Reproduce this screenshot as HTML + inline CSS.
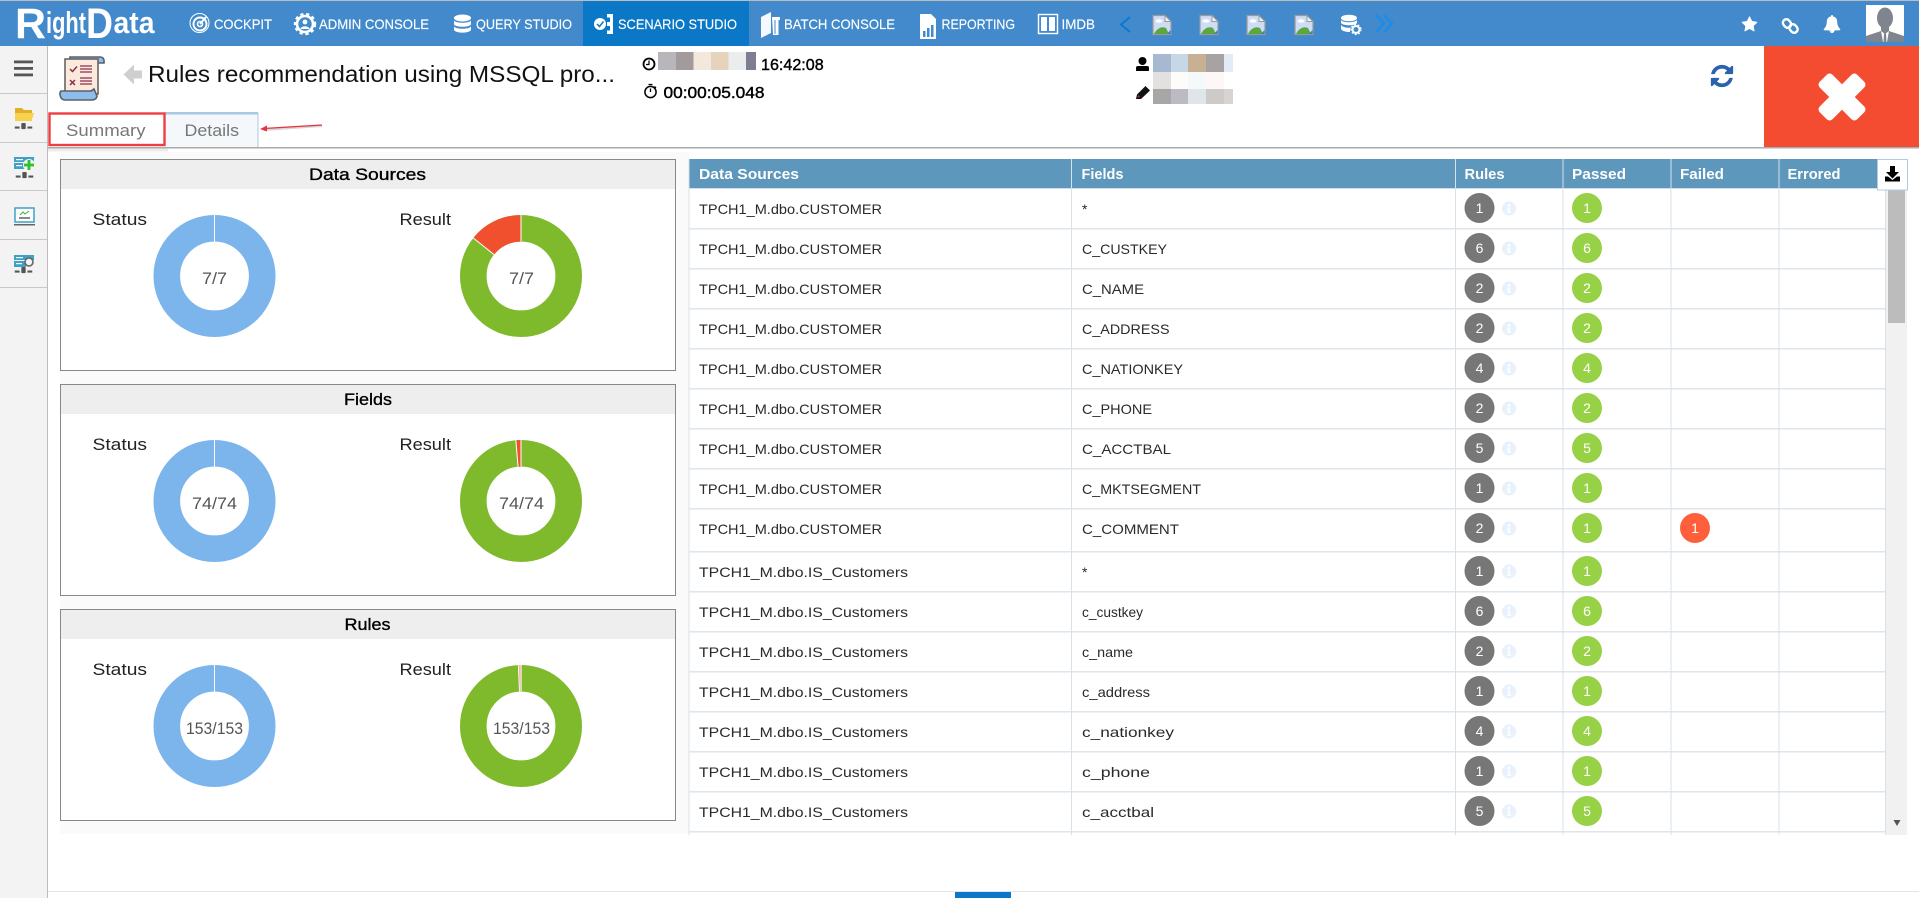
<!DOCTYPE html>
<html lang="en">
<head>
<meta charset="utf-8">
<title>Rules recommendation</title>
<style>
html,body{margin:0;padding:0;background:#fff;width:1919px;height:898px;overflow:hidden}
svg{display:block}
text{font-family:"Liberation Sans",sans-serif;white-space:pre}
.nav{font-size:14px;fill:#fff;stroke:#fff;stroke-width:.15}
.cell{font-size:14px;fill:#2a2a2a}
.th{font-size:15px;font-weight:700;fill:#fff}
.bn{font-size:14px;fill:#fff;text-anchor:middle}
.pt{font-size:17px;fill:#000;stroke:#000;stroke-width:.35}
.lb{font-size:16.5px;fill:#222}
.ct{font-size:17px;fill:#555}
.meta{font-size:15.5px;fill:#000;stroke:#000;stroke-width:.4}
.tab{font-size:16.5px;fill:#777}
</style>
</head>
<body>
<svg width="1919" height="898" viewBox="0 0 1919 898" xmlns="http://www.w3.org/2000/svg">
<defs>
<symbol id="broken" viewBox="0 0 20 20" overflow="visible">
  <path d="M1 .5H13L19 6.5V19.5H1Z" fill="#cfdcf5" stroke="#9a9a9a" stroke-width="1.2"/>
  <path d="M13 .5V6.5H19Z" fill="#f4f4f4" stroke="#9a9a9a" stroke-width="1"/>
  <ellipse cx="7" cy="6" rx="3.5" ry="1.8" fill="#fff"/>
  <path d="M2 19C5 13 10 11 14 13L17 19Z" fill="#5aa83c"/>
  <path d="M15 19L18.5 15V19Z" fill="#3f78c0"/>
</symbol>
<symbol id="info" viewBox="0 0 16 16" overflow="visible">
  <circle cx="8" cy="8" r="7.5" fill="#e8f2fc"/>
  <circle cx="8" cy="4.4" r="1.5" fill="#fff"/>
  <path d="M6.2 7H9.2V11.4H10V12.6H6.2V11.4H7V8.2H6.2Z" fill="#fff"/>
</symbol>
<symbol id="net" viewBox="0 0 20 8" overflow="visible">
  <rect x="7.5" y="0" width="5" height="7" rx="1" fill="#555"/>
  <rect x="0" y="4" width="5.5" height="2.4" fill="#555"/>
  <rect x="14.5" y="4" width="5.500" height="2.4" fill="#555"/>
</symbol>
</defs>

<!-- page -->
<rect width="1919" height="898" fill="#fff"/>
<rect x="0" y="0" width="1919" height="1" fill="#bdbdbd"/>

<!-- top bar -->
<rect x="0" y="1" width="1919" height="45" fill="#428acb"/>
<rect x="583" y="1" width="166" height="45" fill="#0a78c6"/>

<!-- logo -->
<text x="15" y="38" font-size="43" font-weight="700" fill="#fff" textLength="31" lengthAdjust="spacingAndGlyphs">R</text>
<text x="46" y="33" font-size="31" font-weight="700" fill="#fff" textLength="40" lengthAdjust="spacingAndGlyphs">ight</text>
<text x="86" y="38" font-size="43" font-weight="700" fill="#fff" textLength="27" lengthAdjust="spacingAndGlyphs">D</text>
<text x="113.500" y="33" font-size="31" font-weight="700" fill="#fff" textLength="41" lengthAdjust="spacingAndGlyphs">ata</text>

<!-- nav icons -->
<g fill="none" stroke="#fff">
  <circle cx="199.5" cy="23" r="9.5" stroke-width="1"/>
  <circle cx="200" cy="24" r="6.5" stroke-width="2"/>
  <circle cx="200" cy="24" r="2.5" stroke-width="1.6"/>
  <path d="M200 24L206 17" stroke-width="2"/>
</g>
<g>
  <circle cx="305" cy="24" r="8" fill="none" stroke="#fff" stroke-width="2.6"/>
  <circle cx="305" cy="24" r="10" fill="none" stroke="#fff" stroke-width="2.4" stroke-dasharray="3.2 2.8"/>
  <circle cx="305" cy="22" r="2.4" fill="#fff"/>
  <path d="M300.5 29C301 25.500 309 25.500 309.500 29Z" fill="#fff"/>
</g>
<g fill="#fff">
  <ellipse cx="462.500" cy="18" rx="8.500" ry="3.500"/>
  <path d="M454 20.500C456 23.500 469 23.500 471 20.500V24.500C469 27.500 456 27.500 454 24.500Z"/>
  <path d="M454 26.500C456 29.500 469 29.500 471 26.500V30C469 33.500 456 33.500 454 30Z"/>
</g>
<g>
  <circle cx="600" cy="24" r="6" fill="#fff"/>
  <path d="M597 24L599.500 26.500L603.500 21.500" fill="none" stroke="#0a78c6" stroke-width="1.500"/>
  <path d="M607 14H613V34H607V30.500H610V26H607V22H610V17.500H607Z" fill="#fff"/>
</g>
<g fill="#fff">
  <path d="M761 19L771 14V35L761 40Z" opacity=".95" transform="translate(0,-2)"/>
  <path d="M772 17H780V20H778.500V35H773Z"/>
  <rect x="774.500" y="20" width="1" height="14" fill="#428acb"/>
</g>
<g>
  <path d="M920 14H931L936 19V39H920Z" fill="#fff"/>
  <rect x="923" y="31" width="2.500" height="6" fill="#428acb"/>
  <rect x="927" y="28" width="2.500" height="9" fill="#428acb"/>
  <rect x="931" y="25" width="2.500" height="12" fill="#428acb"/>
</g>
<g>
  <rect x="1038.500" y="14.500" width="19" height="19" fill="none" stroke="#fff" stroke-width="1.400"/>
  <rect x="1041" y="17" width="6" height="14" fill="#fff"/>
  <rect x="1049" y="17" width="6" height="14" fill="#fff"/>
</g>

<!-- nav text -->
<text class="nav" x="214" y="29" textLength="58" lengthAdjust="spacingAndGlyphs">COCKPIT</text>
<text class="nav" x="319" y="29" textLength="110" lengthAdjust="spacingAndGlyphs">ADMIN CONSOLE</text>
<text class="nav" x="476" y="29" textLength="96" lengthAdjust="spacingAndGlyphs">QUERY STUDIO</text>
<text class="nav" x="618" y="29" textLength="119" lengthAdjust="spacingAndGlyphs">SCENARIO STUDIO</text>
<text class="nav" x="784" y="29" textLength="111" lengthAdjust="spacingAndGlyphs">BATCH CONSOLE</text>
<text class="nav" x="941.500" y="29" textLength="73.500" lengthAdjust="spacingAndGlyphs">REPORTING</text>
<text class="nav" x="1061.500" y="29" textLength="33.500" lengthAdjust="spacingAndGlyphs">IMDB</text>

<!-- chevron and broken icons -->
<path d="M1130 17L1121 24.500L1130 32" fill="none" stroke="#0a78d0" stroke-width="2"/>
<use href="#broken" x="1152" y="15" width="20" height="20"/>
<use href="#broken" x="1199" y="15" width="20" height="20"/>
<use href="#broken" x="1246" y="15" width="20" height="20"/>
<use href="#broken" x="1294" y="15" width="20" height="20"/>
<g fill="#fff">
  <ellipse cx="1349" cy="18" rx="8" ry="3.300"/>
  <path d="M1341 20C1343 23 1355 23 1357 20V23C1355 26 1343 26 1341 23Z"/>
  <path d="M1341 25C1343 28 1350 28 1352 27.500L1350 29V32C1346 32 1342 31 1341 29Z"/>
  <circle cx="1356" cy="29.500" r="3.500" fill="none" stroke="#fff" stroke-width="2"/>
  <circle cx="1356" cy="29.500" r="5" fill="none" stroke="#fff" stroke-width="1.200" stroke-dasharray="1.800 1.800"/>
</g>
<path d="M1376 15L1384 23.500L1376 32M1384 15L1392 23.500L1384 32" fill="none" stroke="#1d8ce8" stroke-width="2.500"/>

<!-- right icons -->
<svg x="1741" y="16" width="17" height="17" viewBox="0 0 1792 1792"><path fill="#fff" d="M1728 647q0 22-26 48l-363 354 86 500q1 7 1 20 0 21-10.500 35.500t-30.500 14.500q-19 0-40-12l-449-236-449 236q-22 12-40 12-21 0-31.500-14.500t-10.500-35.500q0-6 2-20l86-500-364-354q-25-27-25-48 0-37 56-46l502-73 225-455q19-41 49-41t49 41l225 455 502 73q56 9 56 46z"/></svg>
<g fill="none" stroke="#fff" stroke-width="2.400">
  <rect x="1783.500" y="19" width="7" height="9" rx="3.500" transform="rotate(-40 1787 23.500)"/>
  <rect x="1790" y="24" width="7" height="9" rx="3.500" transform="rotate(-40 1793.500 28.500)"/>
</g>
<svg x="1823" y="15" width="18" height="18" viewBox="0 0 1792 1792"><path fill="#fff" d="M912 1696q0-16-16-16-59 0-101.500-42.500t-42.500-101.500q0-16-16-16t-16 16q0 73 51.500 124.500t124.500 51.500q16 0 16-16zm816-288q0 52-38 90t-90 38h-448q0 106-75 181t-181 75-181-75-75-181h-448q-52 0-90-38t-38-90q50-42 91-88t85-119.500 74.500-158.500 50-206 19.500-260q0-152 117-282.500t307-158.500q-8-19-8-39 0-40 28-68t68-28 68 28 28 68q0 20-8 39 190 28 307 158.500t117 282.500q0 139 19.500 260t50 206 74.500 158.500 85 119.500 91 88z"/></svg>
<rect x="1866" y="5" width="38" height="37" fill="#fff"/>
<ellipse cx="1885" cy="18" rx="8" ry="10.500" fill="#7f858e"/>
<path d="M1881 26H1889V31L1904 36V42H1866V36L1881 31Z" fill="#7f858e"/>
<path d="M1881 31L1885 34L1889 31L1887 42H1883Z" fill="#fff"/>
<path d="M1884 33.500H1886L1886.500 42H1883.500Z" fill="#7f858e"/>

<!-- sidebar -->
<rect x="0" y="46" width="47" height="852" fill="#f3f3f3"/>
<rect x="47" y="46" width="1" height="852" fill="#bdbdbd"/>
<rect x="0" y="93" width="47" height="1" fill="#c8c8c8"/>
<rect x="0" y="142" width="47" height="1" fill="#c8c8c8"/>
<rect x="0" y="190" width="47" height="1" fill="#c8c8c8"/>
<rect x="0" y="239" width="47" height="1" fill="#c8c8c8"/>
<rect x="0" y="287" width="47" height="1" fill="#c8c8c8"/>
<rect x="14" y="60.500" width="19" height="2.800" fill="#555"/>
<rect x="14" y="67" width="19" height="2.800" fill="#555"/>
<rect x="14" y="73.500" width="19" height="2.800" fill="#555"/>

<path d="M15 108H22L24 110H32V121H15Z" fill="#e0b02c"/>
<path d="M15 113H34L31.500 121H15Z" fill="#f6d24f"/>
<use href="#net" x="14" y="123" width="19" height="7"/>

<rect x="14" y="157" width="20" height="5" fill="#3fa0c8"/>
<rect x="14" y="163" width="12" height="6" fill="#3fa0c8"/>
<rect x="16" y="159" width="7" height="1.200" fill="#fff"/>
<rect x="16" y="165" width="6" height="1.200" fill="#fff"/>
<circle cx="29" cy="165" r="6" fill="#f3f3f3"/>
<path d="M29 160V170M24 165H34" stroke="#2bc22b" stroke-width="2.800"/>
<use href="#net" x="15" y="172" width="19" height="7"/>

<rect x="15" y="208" width="19" height="14" fill="#fff" stroke="#3fa0c8" stroke-width="1.500"/>
<path d="M20 215L23 212L25 214L29 211" fill="none" stroke="#2fb62f" stroke-width="1"/>
<rect x="19" y="217" width="11" height="2" fill="#888"/>
<rect x="14" y="224" width="21" height="1.500" fill="#666"/>

<rect x="14" y="255" width="20" height="5" fill="#3fa0c8"/>
<rect x="14" y="261" width="12" height="6" fill="#3fa0c8"/>
<rect x="16" y="257" width="7" height="1.200" fill="#fff"/>
<rect x="16" y="263" width="6" height="1.200" fill="#fff"/>
<circle cx="29" cy="262" r="4" fill="#f3f3f3" stroke="#666" stroke-width="1.600"/>
<use href="#net" x="14" y="267" width="19" height="7"/>

<!-- title area -->
<path d="M70 57H100C103 57 104.500 59 104 63H96V60L70 60Z" fill="#8fbdeb" stroke="#5a6068" stroke-width="1.600"/>
<rect x="65" y="59" width="33" height="35" fill="#fbe9dc" stroke="#666" stroke-width="1.600"/>
<path d="M61 91H90C92 91 93 90 94 89L97 96C97 98 95 100 92 100H65C60 100 59 93 61 91Z" fill="#8fbdeb" stroke="#5a6068" stroke-width="1.600"/>
<path d="M70 69L72.500 71.500L77 66.500" fill="none" stroke="#8a2f50" stroke-width="1.500"/>
<path d="M70 80L75 85M75 80L70 85" fill="none" stroke="#8a2f50" stroke-width="1.500"/>
<path d="M80 66H92M80 69H92M80 72H92M80 78H92M80 81H92M80 84H92" stroke="#8a2f50" stroke-width="1.300"/>
<path d="M134 64.500L123.500 74.500L134 84.500V78.500H142V70.500H134Z" fill="#cfcfcf"/>
<text x="148" y="82" font-size="23" fill="#111" textLength="467" lengthAdjust="spacingAndGlyphs">Rules recommendation using MSSQL pro...</text>

<!-- meta -->
<circle cx="649" cy="64" r="5.500" fill="none" stroke="#000" stroke-width="1.800"/>
<path d="M649 60.500V64.500H646" fill="none" stroke="#000" stroke-width="1.200"/>
<rect x="658" y="52" width="18" height="18" fill="#b8b6ba"/>
<rect x="676" y="52" width="17.500" height="18" fill="#a39b9b"/>
<rect x="693.500" y="52" width="17.500" height="18" fill="#f3e8dc"/>
<rect x="711" y="52" width="17.600" height="18" fill="#e5d3bc"/>
<rect x="728.600" y="52" width="17.400" height="18" fill="#eaeced"/>
<rect x="746" y="52" width="10" height="18" fill="#7e7e92"/>
<text class="meta" x="761" y="70" textLength="62.700" lengthAdjust="spacingAndGlyphs">16:42:08</text>
<circle cx="650.500" cy="92" r="5.600" fill="none" stroke="#000" stroke-width="1.500"/>
<path d="M648.500 84.500H652.500M650.500 92V88.500M654.500 86.500L656 88" fill="none" stroke="#000" stroke-width="1.300"/>
<text class="meta" x="663.500" y="98" textLength="101" lengthAdjust="spacingAndGlyphs">00:00:05.048</text>

<circle cx="1142.500" cy="61" r="4" fill="#000"/>
<path d="M1136 71C1136 65.500 1149 65.500 1149 71Z" fill="#000"/>
<rect x="1136" y="66" width="13" height="5" rx="2" fill="#000"/>
<path d="M1136 99L1137 94.500L1145.500 86L1150 90.500L1141 99Z" fill="#111"/>
<path d="M1137.500 97.500L1138 95L1140 97Z" fill="#c33"/>

<rect x="1153" y="54" width="18" height="18" fill="#a7b9d1"/>
<rect x="1171" y="54" width="17" height="18" fill="#c6d8e6"/>
<rect x="1188" y="54" width="18" height="18" fill="#c8b193"/>
<rect x="1206" y="54" width="18" height="18" fill="#a8a3a2"/>
<rect x="1224" y="54" width="9" height="18" fill="#e1ecf8"/>
<rect x="1153" y="72" width="18" height="17" fill="#e3e1df"/>
<rect x="1171" y="72" width="17" height="17" fill="#fefcfb"/>
<rect x="1188" y="72" width="18" height="17" fill="#f5f9fc"/>
<rect x="1206" y="72" width="18" height="17" fill="#fdf8f6"/>
<rect x="1153" y="89" width="18" height="15" fill="#a9a6a7"/>
<rect x="1171" y="89" width="17" height="15" fill="#bcbbc3"/>
<rect x="1188" y="89" width="18" height="15" fill="#e0e5e9"/>
<rect x="1206" y="89" width="18" height="15" fill="#cdcbc9"/>
<rect x="1224" y="89" width="9" height="15" fill="#d8d4d2"/>

<svg x="1709" y="63" width="26" height="26" viewBox="0 0 1792 1792"><path fill="#2a62ae" d="M1639 1056q0 5-1 7-64 268-268 434.500t-478 166.500q-146 0-282.500-55t-243.500-157l-129 129q-19 19-45 19t-45-19-19-45v-448q0-26 19-45t45-19h448q26 0 45 19t19 45-19 45l-137 137q71 66 161 102t187 36q134 0 250-65t186-179q11-17 53-117 8-23 30-23h192q13 0 22.500 9.500t9.500 22.500zm25-800v448q0 26-19 45t-45 19h-448q-26 0-45-19t-19-45 19-45l138-138q-148-137-349-137-134 0-250 65t-186 179q-11 17-53 117-8 23-30 23h-199q-13 0-22.500-9.500t-9.500-22.500v-7q65-268 270-434.500t480-166.500q146 0 284 55.500t245 156.500l130-129q19-19 45-19t45 19 19 45z"/></svg>

<rect x="1764" y="46" width="155" height="101" fill="#f44c30"/>
<rect x="1815.500" y="88" width="53" height="18" rx="4" fill="#fff" transform="rotate(45 1842 97)"/>
<rect x="1815.500" y="88" width="53" height="18" rx="4" fill="#fff" transform="rotate(-45 1842 97)"/>

<!-- tabs -->
<rect x="48" y="147" width="1871" height="1.500" fill="#ababab"/>
<rect x="48" y="148.500" width="120" height="3" fill="#ececec"/>
<rect x="165" y="113" width="93" height="34" fill="#f5f8fa"/>
<rect x="165" y="112" width="93" height="2.500" fill="#a8c8e4"/>
<rect x="257.500" y="113" width="1" height="34" fill="#a8c8e4"/>
<rect x="49.500" y="113.500" width="115" height="31.500" fill="#fff" stroke="#ef3e42" stroke-width="2.400"/>
<text class="tab" x="66" y="136" textLength="79.500" lengthAdjust="spacingAndGlyphs">Summary</text>
<text class="tab" x="184.500" y="136" textLength="54.500" lengthAdjust="spacingAndGlyphs">Details</text>
<path d="M264 130L322 126" stroke="#bbb" stroke-width="2" opacity=".6"/>
<path d="M264 128.500L322 125" stroke="#e8323c" stroke-width="1.300"/>
<path d="M260 129L267 125.500V131.500Z" fill="#e8323c"/>

<!-- left background -->
<rect x="60" y="152" width="629" height="682" fill="#fafafa"/>

<!-- panel 1 -->
<rect x="60.500" y="159.500" width="615" height="211" fill="#fff" stroke="#888" stroke-width="1"/>
<rect x="61" y="160" width="614" height="29" fill="#eee"/>
<text class="pt" x="309" y="180" textLength="117" lengthAdjust="spacingAndGlyphs">Data Sources</text>
<text class="lb" x="92.500" y="225" textLength="54.500" lengthAdjust="spacingAndGlyphs">Status</text>
<text class="lb" x="399.500" y="225" textLength="51.500" lengthAdjust="spacingAndGlyphs">Result</text>
<circle cx="214.500" cy="276" r="47.700" fill="none" stroke="#7cb5ec" stroke-width="26.600"/>
<rect x="214" y="215" width="1" height="27" fill="#fff"/>
<text class="ct" x="202" y="284" textLength="25" lengthAdjust="spacingAndGlyphs">7/7</text>
<g transform="translate(521,276)">
  <circle r="47.700" fill="none" stroke="#7fba2c" stroke-width="26.600"/>
  <path d="M0 -61A61 61 0 0 0 -47.700 -38L-26.900 -21.400A34.400 34.400 0 0 1 0 -34.400Z" fill="#f0502e"/>
  <path d="M0 -61V-34.400M-47.700 -38L-26.900 -21.400" stroke="#fff" stroke-width="1"/>
</g>
<text class="ct" x="509" y="284" textLength="25" lengthAdjust="spacingAndGlyphs">7/7</text>

<!-- panel 2 -->
<rect x="60.500" y="384.500" width="615" height="211" fill="#fff" stroke="#888" stroke-width="1"/>
<rect x="61" y="385" width="614" height="29" fill="#eee"/>
<text class="pt" x="344" y="405" textLength="48" lengthAdjust="spacingAndGlyphs">Fields</text>
<text class="lb" x="92.500" y="450" textLength="54.500" lengthAdjust="spacingAndGlyphs">Status</text>
<text class="lb" x="399.500" y="450" textLength="51.500" lengthAdjust="spacingAndGlyphs">Result</text>
<circle cx="214.500" cy="501" r="47.700" fill="none" stroke="#7cb5ec" stroke-width="26.600"/>
<rect x="214" y="440" width="1" height="27" fill="#fff"/>
<text class="ct" x="192" y="509" textLength="45" lengthAdjust="spacingAndGlyphs">74/74</text>
<g transform="translate(521,501)">
  <circle r="47.700" fill="none" stroke="#7fba2c" stroke-width="26.600"/>
  <path d="M0 -61A61 61 0 0 0 -5.200 -60.800L-2.900 -34.300A34.400 34.400 0 0 1 0 -34.400Z" fill="#f0502e"/>
  <path d="M0 -61V-34.400M-5.200 -60.800L-2.900 -34.300" stroke="#fff" stroke-width="1"/>
</g>
<text class="ct" x="499" y="509" textLength="45" lengthAdjust="spacingAndGlyphs">74/74</text>

<!-- panel 3 -->
<rect x="60.500" y="609.500" width="615" height="211" fill="#fff" stroke="#888" stroke-width="1"/>
<rect x="61" y="610" width="614" height="29" fill="#eee"/>
<text class="pt" x="344.500" y="630" textLength="46" lengthAdjust="spacingAndGlyphs">Rules</text>
<text class="lb" x="92.500" y="675" textLength="54.500" lengthAdjust="spacingAndGlyphs">Status</text>
<text class="lb" x="399.500" y="675" textLength="51.500" lengthAdjust="spacingAndGlyphs">Result</text>
<circle cx="214.500" cy="726" r="47.700" fill="none" stroke="#7cb5ec" stroke-width="26.600"/>
<rect x="214" y="665" width="1" height="27" fill="#fff"/>
<text class="ct" x="186" y="734" textLength="57" lengthAdjust="spacingAndGlyphs">153/153</text>
<g transform="translate(521,726)">
  <circle r="47.700" fill="none" stroke="#7fba2c" stroke-width="26.600"/>
  <path d="M0 -61A61 61 0 0 0 -2.500 -60.950L-1.400 -34.400A34.400 34.400 0 0 1 0 -34.400Z" fill="#f3b8a8"/>
  <path d="M.2 -61V-34.400M-2.700 -60.950L-1.600 -34.400" stroke="#fff" stroke-width=".8"/>
</g>
<text class="ct" x="493" y="734" textLength="57" lengthAdjust="spacingAndGlyphs">153/153</text>

<!-- table -->
<rect x="689" y="159" width="1196" height="676" fill="#fff"/>
<rect x="689" y="159" width="1196" height="29" fill="#5e97bc"/>
<rect x="689" y="188" width="1196" height="1" fill="#cfdfea"/>
<g fill="#dfe5eb">
  <rect x="689" y="228" width="1196" height="1.500"/>
  <rect x="689" y="268" width="1196" height="1.500"/>
  <rect x="689" y="308" width="1196" height="1.500"/>
  <rect x="689" y="348" width="1196" height="1.500"/>
  <rect x="689" y="388" width="1196" height="1.500"/>
  <rect x="689" y="428" width="1196" height="1.500"/>
  <rect x="689" y="468" width="1196" height="1.500"/>
  <rect x="689" y="508" width="1196" height="1.500"/>
  <rect x="689" y="551" width="1196" height="1.500"/>
  <rect x="689" y="591" width="1196" height="1.500"/>
  <rect x="689" y="631" width="1196" height="1.500"/>
  <rect x="689" y="671" width="1196" height="1.500"/>
  <rect x="689" y="711" width="1196" height="1.500"/>
  <rect x="689" y="751" width="1196" height="1.500"/>
  <rect x="689" y="791" width="1196" height="1.500"/>
  <rect x="689" y="831" width="1196" height="1.500"/>
</g>
<g fill="#d6e1ea">
  <rect x="688.500" y="159" width="1" height="676"/>
  <rect x="1071" y="159" width="1" height="676"/>
  <rect x="1455" y="159" width="1" height="676"/>
  <rect x="1562.500" y="159" width="1" height="676"/>
  <rect x="1670.500" y="159" width="1" height="676"/>
  <rect x="1778.500" y="159" width="1" height="676"/>
  <rect x="1885" y="159" width="1" height="676"/>
</g>
<text class="th" x="699" y="179" textLength="100" lengthAdjust="spacingAndGlyphs">Data Sources</text>
<text class="th" x="1081.500" y="179" textLength="42" lengthAdjust="spacingAndGlyphs">Fields</text>
<text class="th" x="1464.500" y="179" textLength="40" lengthAdjust="spacingAndGlyphs">Rules</text>
<text class="th" x="1572" y="179" textLength="54" lengthAdjust="spacingAndGlyphs">Passed</text>
<text class="th" x="1680" y="179" textLength="44" lengthAdjust="spacingAndGlyphs">Failed</text>
<text class="th" x="1787.500" y="179" textLength="53" lengthAdjust="spacingAndGlyphs">Errored</text>

<!-- scrollbar -->
<rect x="1886" y="188" width="21" height="647" fill="#f1f1f1"/>
<rect x="1888" y="190" width="17" height="133" fill="#bcbcbc"/>
<path d="M1893.500 820H1900.500L1897 826Z" fill="#555"/>

<!-- download -->
<rect x="1877.500" y="159.500" width="30" height="30.500" fill="#fff" stroke="#b0cce0" stroke-width="1"/>
<path d="M1890 166H1895V172H1899L1892.500 178.500L1886 172H1890Z" fill="#000"/>
<path d="M1885 176.500H1888L1892.500 180L1897 176.500H1900V181.500H1885Z" fill="#000"/>

<!-- rows -->
<text class="cell" x="699" y="214" textLength="183" lengthAdjust="spacingAndGlyphs">TPCH1_M.dbo.CUSTOMER</text>
<text class="cell" x="1082" y="214">*</text>
<circle cx="1479.500" cy="208" r="15" fill="#777"/><text class="bn" x="1479.500" y="213">1</text>
<use href="#info" x="1501.500" y="201" width="15" height="15"/>
<circle cx="1587" cy="208" r="15" fill="#97d246"/><text class="bn" x="1587" y="213">1</text>

<text class="cell" x="699" y="254" textLength="183" lengthAdjust="spacingAndGlyphs">TPCH1_M.dbo.CUSTOMER</text>
<text class="cell" x="1082" y="254" textLength="85" lengthAdjust="spacingAndGlyphs">C_CUSTKEY</text>
<circle cx="1479.500" cy="248" r="15" fill="#777"/><text class="bn" x="1479.500" y="253">6</text>
<use href="#info" x="1501.500" y="241" width="15" height="15"/>
<circle cx="1587" cy="248" r="15" fill="#97d246"/><text class="bn" x="1587" y="253">6</text>

<text class="cell" x="699" y="294" textLength="183" lengthAdjust="spacingAndGlyphs">TPCH1_M.dbo.CUSTOMER</text>
<text class="cell" x="1082" y="294" textLength="62" lengthAdjust="spacingAndGlyphs">C_NAME</text>
<circle cx="1479.500" cy="288" r="15" fill="#777"/><text class="bn" x="1479.500" y="293">2</text>
<use href="#info" x="1501.500" y="281" width="15" height="15"/>
<circle cx="1587" cy="288" r="15" fill="#97d246"/><text class="bn" x="1587" y="293">2</text>

<text class="cell" x="699" y="334" textLength="183" lengthAdjust="spacingAndGlyphs">TPCH1_M.dbo.CUSTOMER</text>
<text class="cell" x="1082" y="334" textLength="87.500" lengthAdjust="spacingAndGlyphs">C_ADDRESS</text>
<circle cx="1479.500" cy="328" r="15" fill="#777"/><text class="bn" x="1479.500" y="333">2</text>
<use href="#info" x="1501.500" y="321" width="15" height="15"/>
<circle cx="1587" cy="328" r="15" fill="#97d246"/><text class="bn" x="1587" y="333">2</text>

<text class="cell" x="699" y="374" textLength="183" lengthAdjust="spacingAndGlyphs">TPCH1_M.dbo.CUSTOMER</text>
<text class="cell" x="1082" y="374" textLength="101" lengthAdjust="spacingAndGlyphs">C_NATIONKEY</text>
<circle cx="1479.500" cy="368" r="15" fill="#777"/><text class="bn" x="1479.500" y="373">4</text>
<use href="#info" x="1501.500" y="361" width="15" height="15"/>
<circle cx="1587" cy="368" r="15" fill="#97d246"/><text class="bn" x="1587" y="373">4</text>

<text class="cell" x="699" y="414" textLength="183" lengthAdjust="spacingAndGlyphs">TPCH1_M.dbo.CUSTOMER</text>
<text class="cell" x="1082" y="414" textLength="70" lengthAdjust="spacingAndGlyphs">C_PHONE</text>
<circle cx="1479.500" cy="408" r="15" fill="#777"/><text class="bn" x="1479.500" y="413">2</text>
<use href="#info" x="1501.500" y="401" width="15" height="15"/>
<circle cx="1587" cy="408" r="15" fill="#97d246"/><text class="bn" x="1587" y="413">2</text>

<text class="cell" x="699" y="454" textLength="183" lengthAdjust="spacingAndGlyphs">TPCH1_M.dbo.CUSTOMER</text>
<text class="cell" x="1082" y="454" textLength="89" lengthAdjust="spacingAndGlyphs">C_ACCTBAL</text>
<circle cx="1479.500" cy="448" r="15" fill="#777"/><text class="bn" x="1479.500" y="453">5</text>
<use href="#info" x="1501.500" y="441" width="15" height="15"/>
<circle cx="1587" cy="448" r="15" fill="#97d246"/><text class="bn" x="1587" y="453">5</text>

<text class="cell" x="699" y="494" textLength="183" lengthAdjust="spacingAndGlyphs">TPCH1_M.dbo.CUSTOMER</text>
<text class="cell" x="1082" y="494" textLength="119" lengthAdjust="spacingAndGlyphs">C_MKTSEGMENT</text>
<circle cx="1479.500" cy="488" r="15" fill="#777"/><text class="bn" x="1479.500" y="493">1</text>
<use href="#info" x="1501.500" y="481" width="15" height="15"/>
<circle cx="1587" cy="488" r="15" fill="#97d246"/><text class="bn" x="1587" y="493">1</text>

<text class="cell" x="699" y="534" textLength="183" lengthAdjust="spacingAndGlyphs">TPCH1_M.dbo.CUSTOMER</text>
<text class="cell" x="1082" y="534" textLength="97" lengthAdjust="spacingAndGlyphs">C_COMMENT</text>
<circle cx="1479.500" cy="528" r="15" fill="#777"/><text class="bn" x="1479.500" y="533">2</text>
<use href="#info" x="1501.500" y="521" width="15" height="15"/>
<circle cx="1587" cy="528" r="15" fill="#97d246"/><text class="bn" x="1587" y="533">1</text>
<circle cx="1695" cy="528" r="15" fill="#ff5f3a"/><text class="bn" x="1695" y="533">1</text>

<text class="cell" x="699" y="577" textLength="209" lengthAdjust="spacingAndGlyphs">TPCH1_M.dbo.IS_Customers</text>
<text class="cell" x="1082" y="577">*</text>
<circle cx="1479.500" cy="571" r="15" fill="#777"/><text class="bn" x="1479.500" y="576">1</text>
<use href="#info" x="1501.500" y="564" width="15" height="15"/>
<circle cx="1587" cy="571" r="15" fill="#97d246"/><text class="bn" x="1587" y="576">1</text>

<text class="cell" x="699" y="617" textLength="209" lengthAdjust="spacingAndGlyphs">TPCH1_M.dbo.IS_Customers</text>
<text class="cell" x="1082" y="617" textLength="61" lengthAdjust="spacingAndGlyphs">c_custkey</text>
<circle cx="1479.500" cy="611" r="15" fill="#777"/><text class="bn" x="1479.500" y="616">6</text>
<use href="#info" x="1501.500" y="604" width="15" height="15"/>
<circle cx="1587" cy="611" r="15" fill="#97d246"/><text class="bn" x="1587" y="616">6</text>

<text class="cell" x="699" y="657" textLength="209" lengthAdjust="spacingAndGlyphs">TPCH1_M.dbo.IS_Customers</text>
<text class="cell" x="1082" y="657" textLength="51" lengthAdjust="spacingAndGlyphs">c_name</text>
<circle cx="1479.500" cy="651" r="15" fill="#777"/><text class="bn" x="1479.500" y="656">2</text>
<use href="#info" x="1501.500" y="644" width="15" height="15"/>
<circle cx="1587" cy="651" r="15" fill="#97d246"/><text class="bn" x="1587" y="656">2</text>

<text class="cell" x="699" y="697" textLength="209" lengthAdjust="spacingAndGlyphs">TPCH1_M.dbo.IS_Customers</text>
<text class="cell" x="1082" y="697" textLength="68" lengthAdjust="spacingAndGlyphs">c_address</text>
<circle cx="1479.500" cy="691" r="15" fill="#777"/><text class="bn" x="1479.500" y="696">1</text>
<use href="#info" x="1501.500" y="684" width="15" height="15"/>
<circle cx="1587" cy="691" r="15" fill="#97d246"/><text class="bn" x="1587" y="696">1</text>

<text class="cell" x="699" y="737" textLength="209" lengthAdjust="spacingAndGlyphs">TPCH1_M.dbo.IS_Customers</text>
<text class="cell" x="1082" y="737" textLength="92" lengthAdjust="spacingAndGlyphs">c_nationkey</text>
<circle cx="1479.500" cy="731" r="15" fill="#777"/><text class="bn" x="1479.500" y="736">4</text>
<use href="#info" x="1501.500" y="724" width="15" height="15"/>
<circle cx="1587" cy="731" r="15" fill="#97d246"/><text class="bn" x="1587" y="736">4</text>

<text class="cell" x="699" y="777" textLength="209" lengthAdjust="spacingAndGlyphs">TPCH1_M.dbo.IS_Customers</text>
<text class="cell" x="1082" y="777" textLength="68" lengthAdjust="spacingAndGlyphs">c_phone</text>
<circle cx="1479.500" cy="771" r="15" fill="#777"/><text class="bn" x="1479.500" y="776">1</text>
<use href="#info" x="1501.500" y="764" width="15" height="15"/>
<circle cx="1587" cy="771" r="15" fill="#97d246"/><text class="bn" x="1587" y="776">1</text>

<text class="cell" x="699" y="817" textLength="209" lengthAdjust="spacingAndGlyphs">TPCH1_M.dbo.IS_Customers</text>
<text class="cell" x="1082" y="817" textLength="72" lengthAdjust="spacingAndGlyphs">c_acctbal</text>
<circle cx="1479.500" cy="811" r="15" fill="#777"/><text class="bn" x="1479.500" y="816">5</text>
<use href="#info" x="1501.500" y="804" width="15" height="15"/>
<circle cx="1587" cy="811" r="15" fill="#97d246"/><text class="bn" x="1587" y="816">5</text>

<!-- footer -->
<rect x="48" y="891" width="1871" height="1" fill="#e5e5e5"/>
<rect x="955" y="892" width="56" height="6" fill="#0a78c6"/>
</svg>
</body>
</html>
